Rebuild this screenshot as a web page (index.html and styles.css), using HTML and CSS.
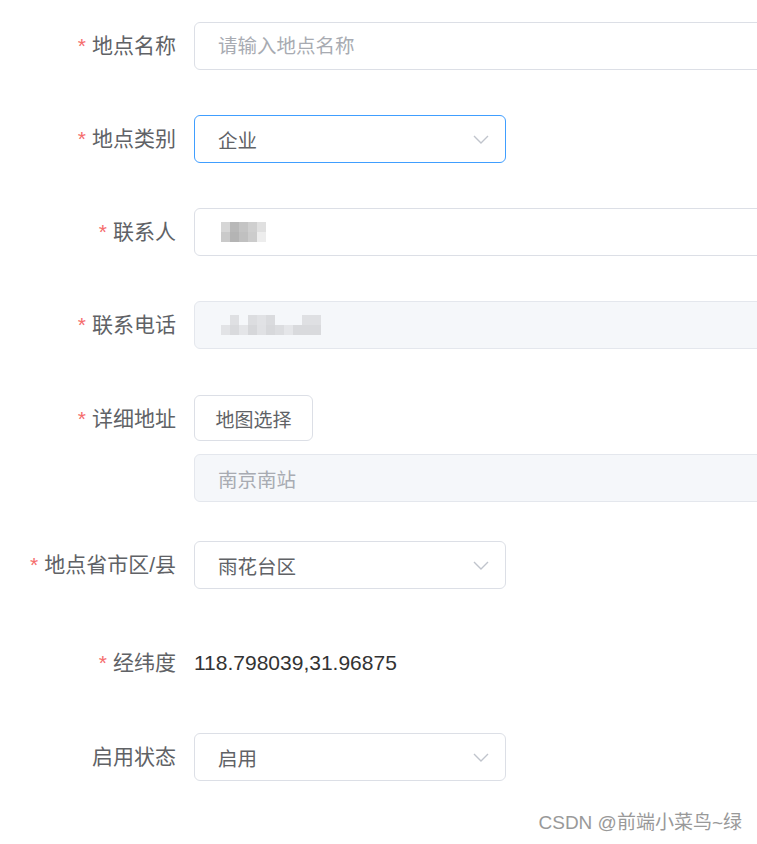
FILE: index.html
```html
<!DOCTYPE html>
<html lang="zh-CN">
<head>
    <meta charset="UTF-8">
    <meta name="viewport" content="width=device-width, initial-scale=1.0">
    <title>地点编辑</title>
    <link rel="stylesheet" href="styles.css">
</head>
<body>
    <div class="page">
        <form class="place-form">
            <!-- 地点名称 -->
            <div class="form-item">
                <label class="form-label required">地点名称</label>
                <div class="form-content">
                    <input class="input input-wide" type="text" placeholder="请输入地点名称">
                </div>
            </div>

            <!-- 地点类别 -->
            <div class="form-item">
                <label class="form-label required">地点类别</label>
                <div class="form-content">
                    <div class="select is-focus">
                        <span class="select-value">企业</span>
                        <svg class="select-arrow" width="16" height="9" viewBox="0 0 16 9">
                            <polyline points="1,1 8,8 15,1" fill="none" stroke="#c0c4cc" stroke-width="1.4"/>
                        </svg>
                    </div>
                </div>
            </div>

            <!-- 联系人 -->
            <div class="form-item">
                <label class="form-label required">联系人</label>
                <div class="form-content">
                    <div class="input input-wide">
                        <span class="mosaic mosaic-name"></span>
                    </div>
                </div>
            </div>

            <!-- 联系电话 -->
            <div class="form-item">
                <label class="form-label required">联系电话</label>
                <div class="form-content">
                    <div class="input input-wide is-disabled">
                        <span class="mosaic mosaic-phone"></span>
                    </div>
                </div>
            </div>

            <!-- 详细地址 -->
            <div class="form-item item-address">
                <label class="form-label required">详细地址</label>
                <div class="form-content content-stack">
                    <button class="btn" type="button">地图选择</button>
                    <input class="input input-wide is-disabled" type="text" value="南京南站" disabled>
                </div>
            </div>

            <!-- 地点省市区/县 -->
            <div class="form-item item-region">
                <label class="form-label required">地点省市区/县</label>
                <div class="form-content">
                    <div class="select">
                        <span class="select-value">雨花台区</span>
                        <svg class="select-arrow" width="16" height="9" viewBox="0 0 16 9">
                            <polyline points="1,1 8,8 15,1" fill="none" stroke="#c0c4cc" stroke-width="1.4"/>
                        </svg>
                    </div>
                </div>
            </div>

            <!-- 经纬度 -->
            <div class="form-item item-lnglat">
                <label class="form-label required">经纬度</label>
                <div class="form-content">
                    <span class="plain-text">118.798039,31.96875</span>
                </div>
            </div>

            <!-- 启用状态 -->
            <div class="form-item">
                <label class="form-label">启用状态</label>
                <div class="form-content">
                    <div class="select">
                        <span class="select-value">启用</span>
                        <svg class="select-arrow" width="16" height="9" viewBox="0 0 16 9">
                            <polyline points="1,1 8,8 15,1" fill="none" stroke="#c0c4cc" stroke-width="1.4"/>
                        </svg>
                    </div>
                </div>
            </div>
        </form>

        <div class="watermark">CSDN @前端小菜鸟~绿</div>
    </div>
</body>
</html>
```

FILE: styles.css
```css
body {
    margin: 0;
    font-family: "Liberation Sans", "Noto Sans CJK SC", sans-serif;
    background: #fff;
}

.page {
    position: relative;
    height: 844px;
    overflow: hidden;
}

.place-form {
    padding-top: 22px;
}

.form-item {
    display: flex;
    margin-bottom: 45px;
}

.item-address {
    padding-top: 1px;
    margin-bottom: 39px;
}

.item-region {
    margin-bottom: 50px;
}

.item-lnglat {
    margin-bottom: 46px;
}

.form-label {
    flex-shrink: 0;
    width: 194px;
    box-sizing: border-box;
    padding-right: 18px;
    text-align: right;
    font-size: 21px;
    line-height: 48px;
    color: #606266;
}

.form-label.required::before {
    content: "*";
    color: #f56c6c;
    margin-right: 6px;
}

.form-content {
    flex: 1;
    min-width: 0;
}

.content-stack {
    display: flex;
    flex-direction: column;
    align-items: flex-start;
    gap: 13px;
}

/* 输入框 */
.input {
    display: flex;
    align-items: center;
    height: 48px;
    box-sizing: border-box;
    padding: 0 23px;
    border: 1px solid #dcdfe6;
    border-radius: 6px;
    background: #fff;
    font-family: inherit;
    font-size: 19.5px;
    color: #606266;
    outline: none;
}

.input::placeholder {
    color: #a8abb2;
}

.input-wide {
    width: 620px;
}

.input.is-disabled {
    background: #f5f7fa;
    border-color: #e4e7ed;
    color: #a8abb2;
}

/* 打码的内容 */
.mosaic {
    display: block;
    height: 20px;
}

.mosaic-name {
    width: 58px;
    background:
        linear-gradient(90deg, #d6d6d6 0 9px, #b8b8b8 9px 18px, #c4c4c4 18px 27px, #cfcfcf 27px 36px, #e0e0e0 36px 45px, transparent 45px) top / 100% 10px no-repeat,
        linear-gradient(90deg, #cacaca 0 9px, #b4b4b4 9px 18px, #c0c0c0 18px 27px, #cccccc 27px 36px, #ededed 36px 45px, transparent 45px) bottom / 100% 10px no-repeat;
    margin-left: 3px;
}

.mosaic-phone {
    width: 120px;
    background:
        linear-gradient(90deg, transparent 0 9px, #dfe0e3 9px 18px, transparent 18px 27px, #dcdde0 27px 36px, #e1e2e5 36px 45px, #dadbde 45px 54px, transparent 54px 81px, #dfe0e3 81px 100px, transparent 100px) top / 100% 10px no-repeat,
        linear-gradient(90deg, #e2e3e6 0 9px, #d9dadd 9px 18px, #e4e5e8 18px 27px, #d6d7da 27px 36px, #e0e1e4 36px 45px, #d7d8db 45px 54px, #dcdde0 54px 63px, #e5e6e9 63px 72px, #d9dadd 72px 100px, transparent 100px) bottom / 100% 10px no-repeat;
    margin-left: 3px;
}

/* 下拉选择 */
.select {
    display: flex;
    align-items: center;
    justify-content: space-between;
    width: 312px;
    height: 48px;
    box-sizing: border-box;
    padding: 0 16px 0 23px;
    border: 1px solid #dcdfe6;
    border-radius: 6px;
    font-size: 19.5px;
    color: #606266;
}

.select.is-focus {
    border-color: #409eff;
}

.select-arrow {
    display: block;
}

/* 按钮 */
.btn {
    width: 119px;
    height: 46px;
    padding: 0;
    border: 1px solid #dcdfe6;
    border-radius: 6px;
    background: #fff;
    font-family: inherit;
    font-size: 19px;
    color: #606266;
}

.plain-text {
    font-size: 21px;
    line-height: 48px;
    color: #333;
}

.watermark {
    position: absolute;
    right: 15px;
    bottom: 10px;
    font-size: 19px;
    color: #999;
}
```
